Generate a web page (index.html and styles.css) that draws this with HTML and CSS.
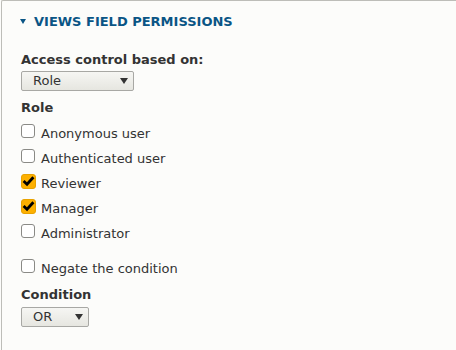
FILE: index.html
```html
<!DOCTYPE html>
<html>
<head>
<meta charset="utf-8">
<link rel="stylesheet" href="styles.css">
</head>
<body>
<div class="details">
  <div class="summary"><span class="tri"></span>Views field permissions</div>
  <div class="body">
    <div class="label label-access">Access control based on:</div>
    <div class="select select-role"><span>Role</span><span class="arrow"></span></div>
    <div class="label label-role">Role</div>
    <div class="checks">
      <div class="row"><span class="box"></span><span class="text">Anonymous user</span></div>
      <div class="row"><span class="box"></span><span class="text">Authenticated user</span></div>
      <div class="row"><span class="box checked"><svg viewBox="0 0 15 15" width="15" height="15"><path d="M2.6 7 L6 10.2 L12.4 3.2" fill="none" stroke="#000" stroke-width="2.8"/></svg></span><span class="text">Reviewer</span></div>
      <div class="row"><span class="box checked"><svg viewBox="0 0 15 15" width="15" height="15"><path d="M2.6 7 L6 10.2 L12.4 3.2" fill="none" stroke="#000" stroke-width="2.8"/></svg></span><span class="text">Manager</span></div>
      <div class="row"><span class="box"></span><span class="text">Administrator</span></div>
    </div>
    <div class="row row-negate"><span class="box"></span><span class="text">Negate the condition</span></div>
    <div class="label label-cond">Condition</div>
    <div class="select select-or"><span>OR</span><span class="arrow"></span></div>
  </div>
</div>
</body>
</html>
```

FILE: styles.css
```css
html, body {
  margin: 0;
  padding: 0;
  background: #fcfcfa;
}
body {
  font-family: "DejaVu Sans", sans-serif;
  font-size: 13px;
  color: #333;
  overflow: hidden;
}
.details {
  margin-left: 1px;
  border-top: 1px solid #bdbdb8;
  border-left: 1px solid #bdbdb8;
  border-top-left-radius: 2px;
  min-height: 100vh;
  padding-top: 12.5px;
  box-sizing: border-box;
}
.summary {
  padding-left: 32px;
  line-height: 16px;
  font-weight: bold;
  text-transform: uppercase;
  color: #0a5585;
  position: relative;
}
.tri {
  position: absolute;
  left: 18px;
  top: 5px;
  width: 0;
  height: 0;
  border-left: 3px solid transparent;
  border-right: 3px solid transparent;
  border-top: 5px solid #0a5585;
}
.body {
  padding-left: 19px;
}
.label {
  font-weight: bold;
  line-height: 16px;
}
.label-access { margin-top: 22.5px; }
.label-role { margin-top: 9.5px; }
.label-cond { margin-top: 4px; }
.select {
  display: flex;
  align-items: center;
  justify-content: space-between;
  box-sizing: border-box;
  height: 20px;
  margin-top: 2.5px;
  border: 1px solid #a8a8a4;
  border-radius: 2px;
  background: linear-gradient(#f6f6f3, #e6e6e0);
  padding: 0 5px 0 11px;
  line-height: 16px;
  color: #333;
}
.select-role { width: 113px; }
.select-or { width: 68px; margin-top: 3.5px; }
.arrow {
  width: 0;
  height: 0;
  border-left: 4px solid transparent;
  border-right: 4px solid transparent;
  border-top: 6px solid #333;
}
.checks { margin-top: 7px; }
.row {
  display: flex;
  align-items: flex-start;
  height: 25px;
}
.row-negate { margin-top: 10px; }
.box {
  box-sizing: border-box;
  width: 14px;
  height: 14px;
  margin-top: 1px;
  border: 1px solid #8a8a86;
  border-radius: 3px;
  background: #fff;
  flex: none;
}
.box.checked {
  width: 15px;
  height: 15px;
  margin-top: 0.5px;
  margin-right: -1px;
  border: 1px solid #e8a200;
  background: #fdb000;
  position: relative;
}
.box.checked svg {
  position: absolute;
  left: -1px;
  top: -1px;
}
.text {
  padding-top: 3px;
  line-height: 16px;
  margin-left: 6px;
}
```
